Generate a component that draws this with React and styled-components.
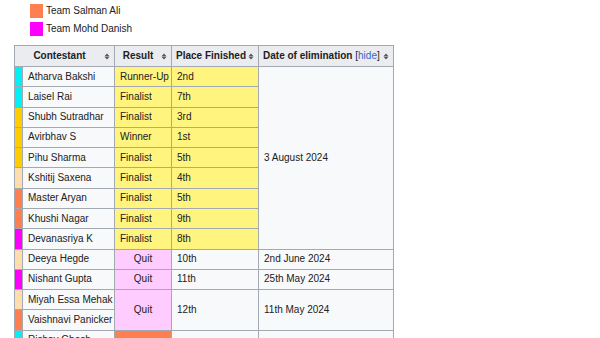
import React from "react";
import styled, { createGlobalStyle } from "styled-components";

const Global = createGlobalStyle`
  html, body { margin: 0; padding: 0; background: #fff; }
  body { font-family: "Liberation Sans", Arial, sans-serif; color: #202122; overflow: hidden; }
`;

const Page = styled.div`
  margin-top: -14px;
  padding-left: 14px;
`;

const Legend = styled.ul`
  list-style: none;
  margin: 0 0 0 16px;
  padding: 0;
  display: flex;
  flex-direction: column;
  gap: 4px;
`;

const LegendItem = styled.li`
  display: flex;
  align-items: center;
  gap: 3px;
  font-size: 10px;
  line-height: 14px;
`;

const Swatch = styled.span`
  width: 13px;
  height: 14px;
  background: ${(p) => p.$c};
  flex: none;
`;

const Table = styled.table`
  margin-top: 9px;
  border-collapse: collapse;
  table-layout: fixed;
  width: 379px;
  font-size: 10px;
  line-height: 12px;
  background: #f8f9fa;
  border: 1px solid #a2a9b1;
`;

const Th = styled.th`
  background: #eaecf0;
  border: 1px solid #a2a9b1;
  font-weight: bold;
  padding: 4px 14px 4px 4px;
  text-align: center;
  position: relative;
  white-space: nowrap;
`;

const SortIcon = styled.svg`
  position: absolute;
  right: 4px;
  top: 50%;
  margin-top: -3px;
`;

const HideLink = styled.span`
  font-weight: normal;
  color: #3366cc;
  &::before { content: "["; color: #202122; }
  &::after { content: "]"; color: #202122; }
`;

const Td = styled.td`
  border: 1px solid #a2a9b1;
  padding: 3.65px 5px;
  height: 12px;
  white-space: nowrap;
  overflow: hidden;
  vertical-align: middle;
  background: ${(p) => p.$bg || "transparent"};
  text-align: ${(p) => (p.$center ? "center" : "left")};
`;

const Strip = styled.td`
  border: 1px solid #a2a9b1;
  padding: 0;
  background: ${(p) => p.$c};
`;

const COLORS = {
  cyan: "#00f0f5",
  gold: "#ffcc00",
  tan: "#ffdead",
  coral: "#ff7f50",
  magenta: "#ff00ff",
};
const YELLOW = "#fff47e";
const PINK = "#ffccff";

const Sort = () => (
  <SortIcon width="6" height="7" viewBox="0 0 6 7">
    <path d="M3 0.5 L5.5 3.2 L0.5 3.2 Z M3 6.5 L5.5 3.8 L0.5 3.8 Z" fill="#54595d" />
  </SortIcon>
);

const finalists = [
  ["cyan", "Atharva Bakshi", "Runner-Up", "2nd"],
  ["cyan", "Laisel Rai", "Finalist", "7th"],
  ["gold", "Shubh Sutradhar", "Finalist", "3rd"],
  ["gold", "Avirbhav S", "Winner", "1st"],
  ["gold", "Pihu Sharma", "Finalist", "5th"],
  ["tan", "Kshitij Saxena", "Finalist", "4th"],
  ["coral", "Master Aryan", "Finalist", "5th"],
  ["coral", "Khushi Nagar", "Finalist", "9th"],
  ["magenta", "Devanasriya K", "Finalist", "8th"],
];

export default function App() {
  return (
    <>
      <Global />
      <Page>
        <Legend>
          <LegendItem><Swatch $c={COLORS.tan} />Team Guru Randhawa</LegendItem>
          <LegendItem><Swatch $c={COLORS.coral} />Team Salman Ali</LegendItem>
          <LegendItem><Swatch $c={COLORS.magenta} />Team Mohd Danish</LegendItem>
        </Legend>
        <Table>
          <colgroup>
            <col style={{ width: 8 }} />
            <col style={{ width: 92 }} />
            <col style={{ width: 57 }} />
            <col style={{ width: 87 }} />
            <col style={{ width: 135 }} />
          </colgroup>
          <thead>
            <tr>
              <Th colSpan={2}>Contestant<Sort /></Th>
              <Th>Result<Sort /></Th>
              <Th>Place Finished<Sort /></Th>
              <Th>Date of elimination <HideLink>hide</HideLink><Sort /></Th>
            </tr>
          </thead>
          <tbody>
            {finalists.map(([c, name, res, place], i) => (
              <tr key={name}>
                <Strip $c={COLORS[c]} />
                <Td>{name}</Td>
                <Td $bg={YELLOW}>{res}</Td>
                <Td $bg={YELLOW}>{place}</Td>
                {i === 0 && <Td rowSpan={9}>3 August 2024</Td>}
              </tr>
            ))}
            <tr>
              <Strip $c={COLORS.tan} />
              <Td>Deeya Hegde</Td>
              <Td $bg={PINK} $center>Quit</Td>
              <Td>10th</Td>
              <Td>2nd June 2024</Td>
            </tr>
            <tr>
              <Strip $c={COLORS.magenta} />
              <Td>Nishant Gupta</Td>
              <Td $bg={PINK} $center>Quit</Td>
              <Td>11th</Td>
              <Td>25th May 2024</Td>
            </tr>
            <tr>
              <Strip $c={COLORS.tan} />
              <Td>Miyah Essa Mehak</Td>
              <Td $bg={PINK} $center rowSpan={2}>Quit</Td>
              <Td rowSpan={2}>12th</Td>
              <Td rowSpan={2}>11th May 2024</Td>
            </tr>
            <tr>
              <Strip $c={COLORS.coral} />
              <Td>Vaishnavi Panicker</Td>
            </tr>
            <tr>
              <Strip $c={COLORS.cyan} />
              <Td>Rishav Ghosh</Td>
              <Td $bg={COLORS.coral} $center rowSpan={2}>Eliminated</Td>
              <Td rowSpan={2}>13th</Td>
              <Td rowSpan={2}>4th May 2024</Td>
            </tr>
            <tr>
              <Strip $c={COLORS.gold} />
              <Td>Sneha Shankar</Td>
            </tr>
          </tbody>
        </Table>
      </Page>
    </>
  );
}
